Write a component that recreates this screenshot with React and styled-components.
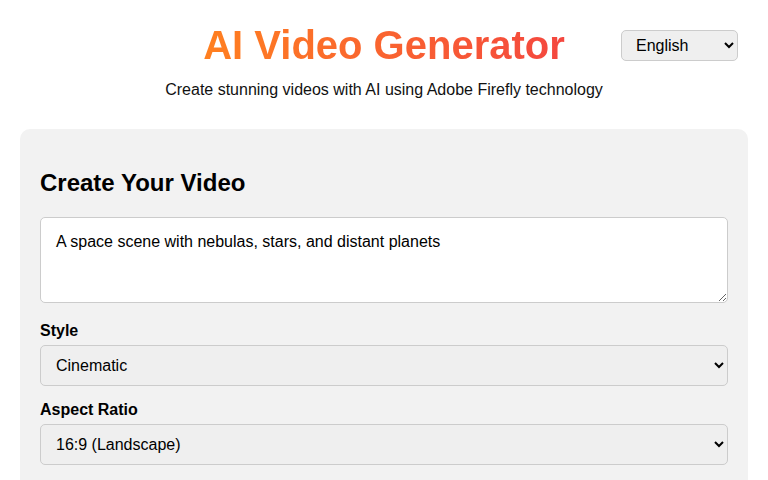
import React, { useState } from "react";
import styled, { createGlobalStyle } from "styled-components";

const Global = createGlobalStyle`
  html, body { margin: 0; padding: 0; background: #ffffff; }
  body { font-family: "Liberation Sans", Arial, sans-serif; color: #000; }
  * { box-sizing: border-box; }
`;

const Page = styled.div`
  padding: 20px;
`;

const Header = styled.header`
  position: relative;
  text-align: center;
  margin-bottom: 30px;
`;

const Title = styled.h1`
  margin: 2px 0 0;
  font-size: 40px;
  font-weight: 700;
  line-height: 46px;
  background: linear-gradient(90deg, #ff8020 0%, #f4473f 100%);
  -webkit-background-clip: text;
  background-clip: text;
  color: transparent;
  display: inline-block;
`;

const Subtitle = styled.p`
  margin: 13px 0 0;
  font-size: 16px;
  line-height: 18px;
  color: #111;
`;

const LangSelect = styled.select`
  position: absolute;
  top: 10px;
  right: 10px;
  width: 117px;
  height: 31px;
  padding: 5px 10px;
  font-family: "Liberation Sans", Arial, sans-serif;
  font-size: 16px;
  color: #000;
  background: #efefef;
  border: 1px solid #ccc;
  border-radius: 5px;
`;

const Card = styled.section`
  background: #f2f2f2;
  border-radius: 10px;
  padding: 20px;
  min-height: 400px;
`;

const CardTitle = styled.h2`
  margin: 20px 0 21px;
  font-size: 24px;
  font-weight: 700;
  line-height: 27px;
`;

const Prompt = styled.textarea`
  display: block;
  width: 100%;
  height: 86px;
  padding: 15px 15px;
  font-family: "Liberation Sans", Arial, sans-serif;
  font-size: 16px;
  line-height: 18px;
  color: #000;
  background: #fff;
  border: 1px solid #ccc;
  border-radius: 5px;
  resize: vertical;
  margin-bottom: 19px;
`;

const Group = styled.div`
  display: flex;
  flex-direction: column;
  margin-bottom: 15px;
`;

const Label = styled.label`
  font-size: 16px;
  font-weight: 700;
  line-height: 18px;
  margin-bottom: 5px;
`;

const Select = styled.select`
  width: 100%;
  height: 41px;
  padding: 10px 11px;
  font-family: "Liberation Sans", Arial, sans-serif;
  font-size: 16px;
  color: #000;
  background: #efefef;
  border: 1px solid #ccc;
  border-radius: 5px;
`;

export default function App() {
  const [prompt, setPrompt] = useState(
    "A space scene with nebulas, stars, and distant planets"
  );
  return (
    <Page>
      <Global />
      <Header>
        <Title>AI Video Generator</Title>
        <Subtitle>Create stunning videos with AI using Adobe Firefly technology</Subtitle>
        <LangSelect defaultValue="en">
          <option value="en">English</option>
          <option value="es">Español</option>
          <option value="fr">Français</option>
        </LangSelect>
      </Header>
      <Card>
        <CardTitle>Create Your Video</CardTitle>
        <Prompt value={prompt} onChange={(e) => setPrompt(e.target.value)} />
        <Group>
          <Label>Style</Label>
          <Select defaultValue="cinematic">
            <option value="cinematic">Cinematic</option>
            <option value="anime">Anime</option>
          </Select>
        </Group>
        <Group>
          <Label>Aspect Ratio</Label>
          <Select defaultValue="16:9">
            <option value="16:9">16:9 (Landscape)</option>
            <option value="9:16">9:16 (Portrait)</option>
          </Select>
        </Group>
      </Card>
    </Page>
  );
}
